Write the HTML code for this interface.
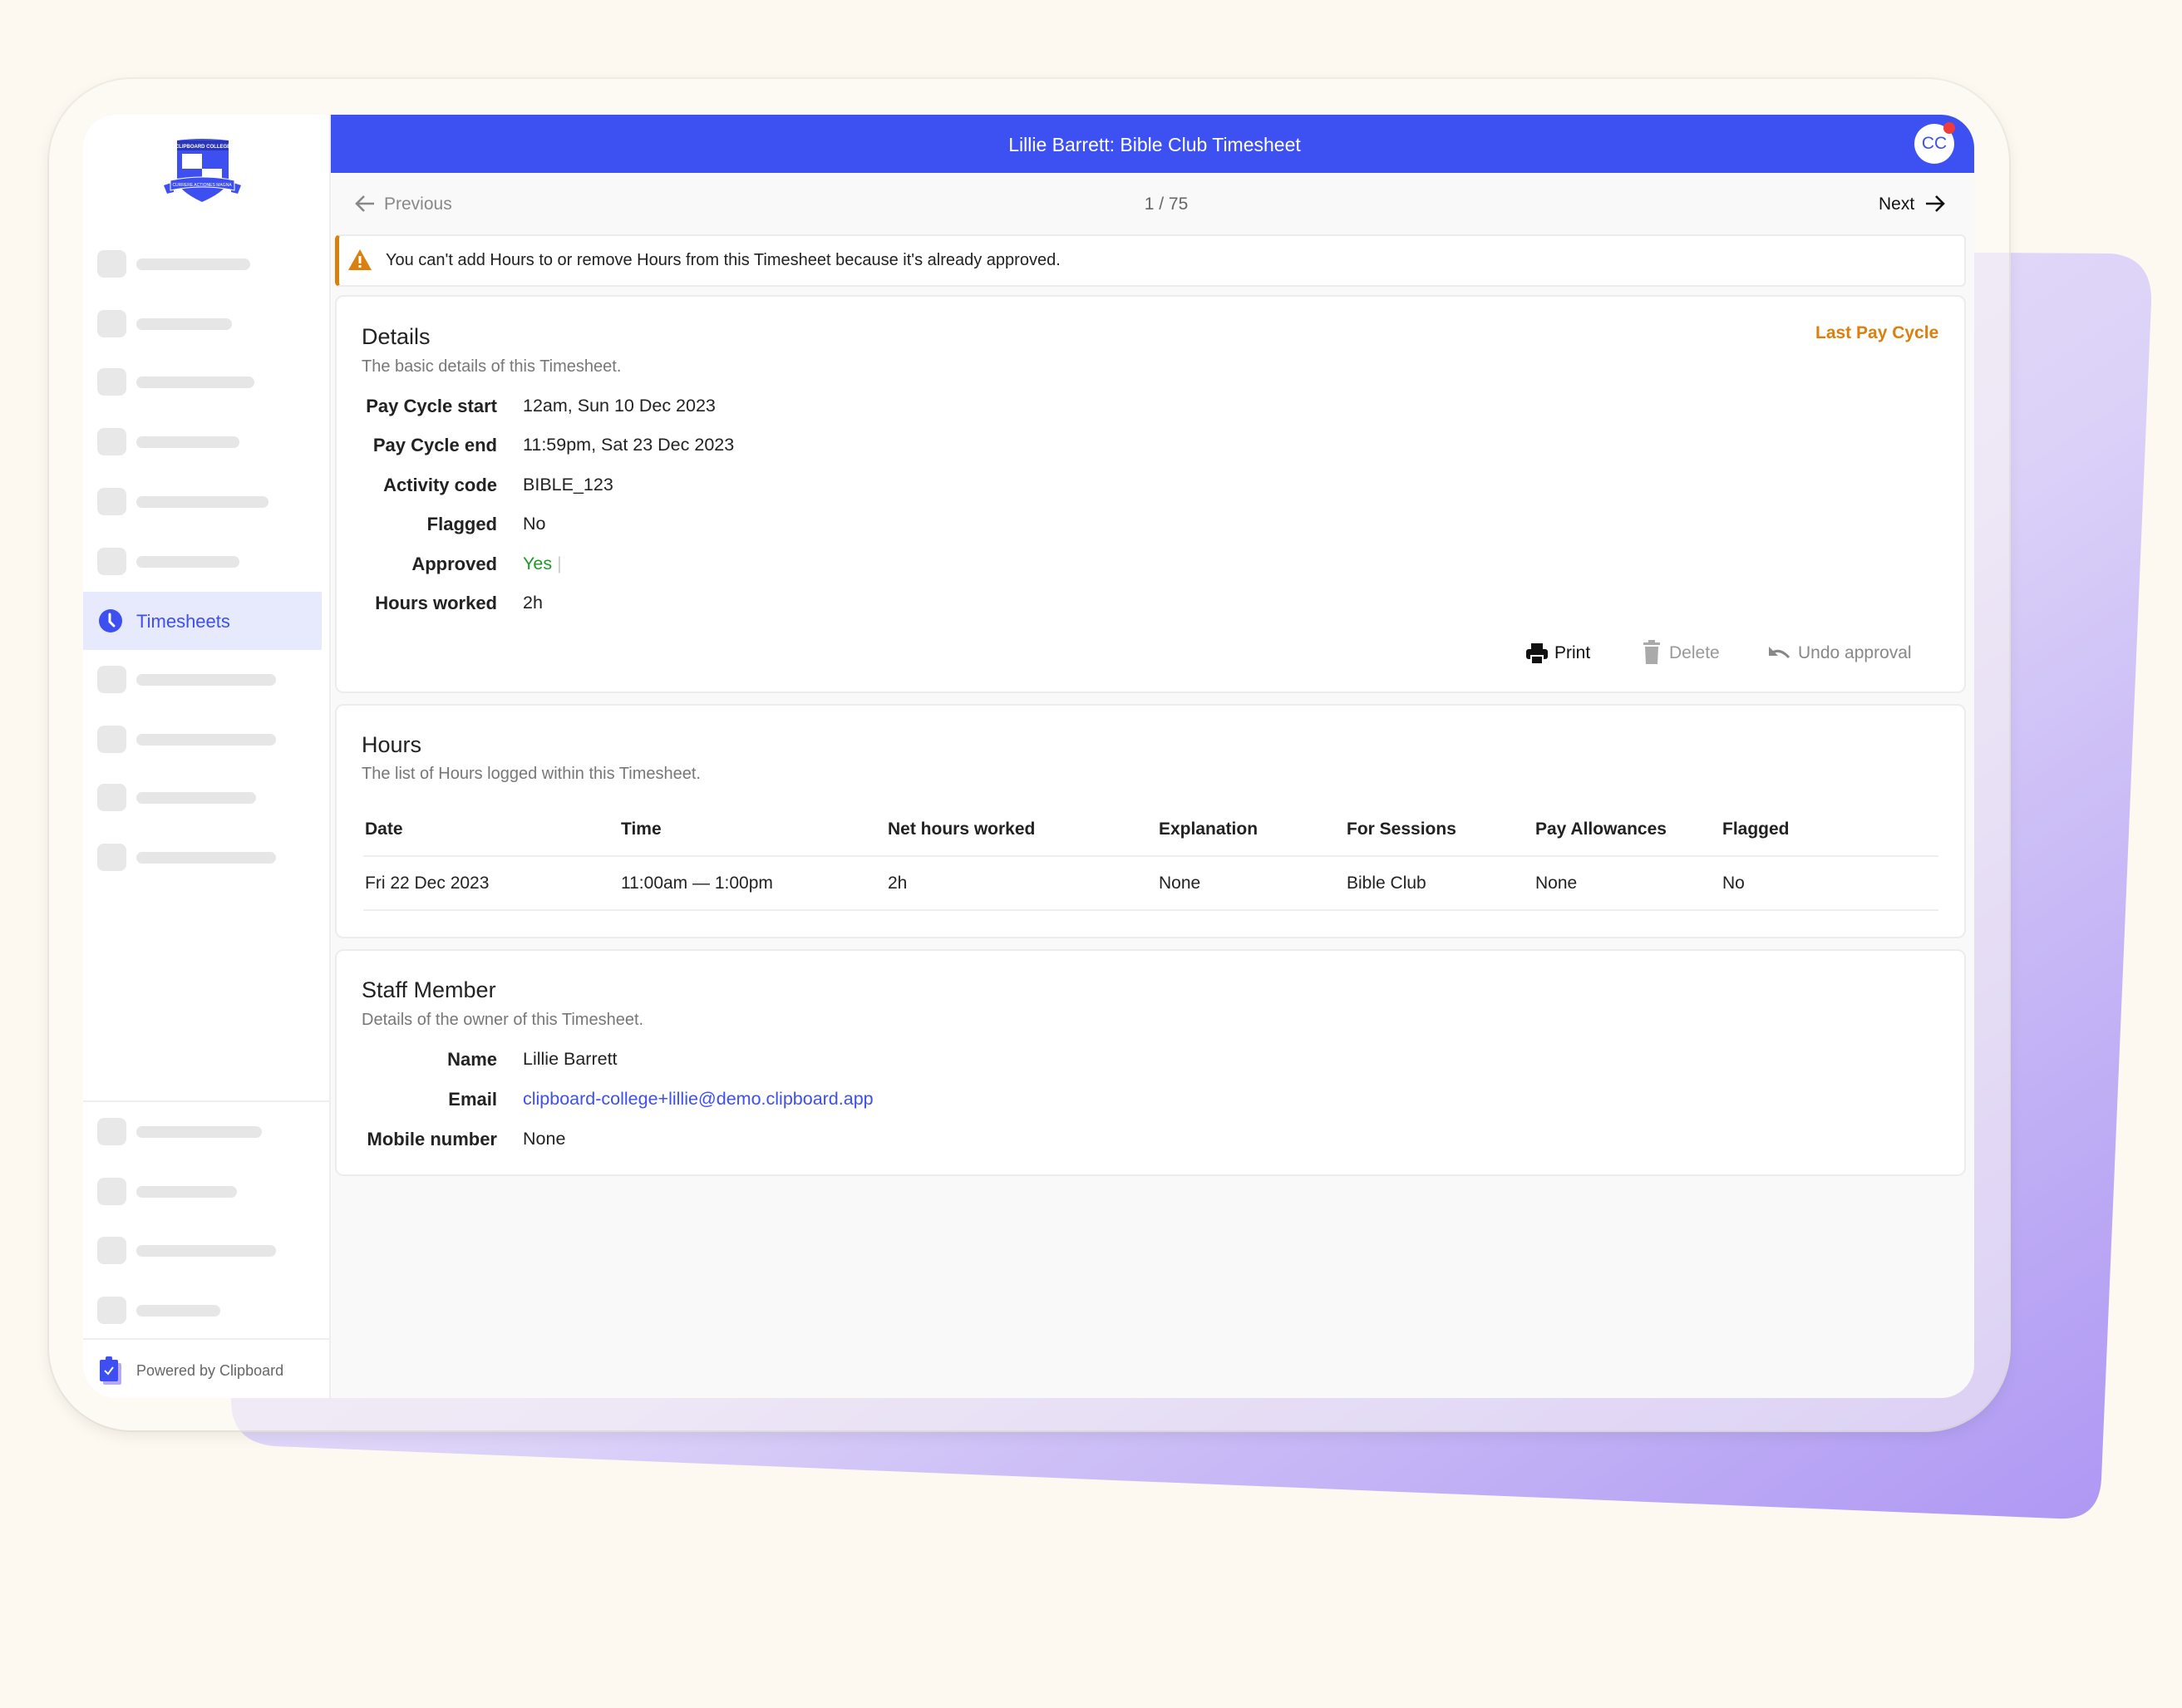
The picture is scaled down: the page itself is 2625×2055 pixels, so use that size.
<!DOCTYPE html>
<html><head><meta charset="utf-8"><style>
*{margin:0;padding:0;box-sizing:border-box}
body{width:2625px;height:2055px;background:#fdf9f1;font-family:"Liberation Sans",sans-serif;position:relative;overflow:hidden;color:#222}
.a{position:absolute;white-space:nowrap}
.frame{position:absolute;left:59px;top:95px;width:2358px;height:1626px;border-radius:100px;background:rgba(253,250,244,0.55);box-shadow:0 6px 18px rgba(0,0,0,0.08),0 0 0 2px rgba(240,236,228,0.8)}
.screen{position:absolute;left:100px;top:138px;width:2275px;height:1544px;border-radius:40px;overflow:hidden;background:#f9f9f9}
.side{position:absolute;left:0;top:0;width:298px;height:1546px;background:#fff;border-right:2px solid #eee}
.sq{position:absolute;left:17px;width:35px;height:33px;border-radius:8px;background:#e8e8e8}
.bar{position:absolute;left:64px;height:14px;border-radius:7px;background:#e6e6e6}
.card{position:absolute;left:303px;width:1962px;background:#fff;border:2px solid #ececec;border-radius:10px}
.lbl{position:absolute;font-size:22px;font-weight:bold;text-align:right;width:300px;color:#222}
.val{position:absolute;font-size:21.5px;color:#222}
.h{font-size:27px;color:#222}
.sub{font-size:20px;color:#777}
.th{position:absolute;font-size:21px;font-weight:bold;color:#222}
.td{position:absolute;font-size:21px;color:#222}
</style></head><body>
<svg class="a" style="left:0;top:0" width="2625" height="2055">
<defs><linearGradient id="g" x1="0" y1="0" x2="1" y2="1"><stop offset="0" stop-color="#f1ecfb"/><stop offset="0.55" stop-color="#dcd2f8"/><stop offset="1" stop-color="#ad96f3"/></linearGradient></defs>
<path d="M300 290 L2540 305 Q2590 310 2588 365 L2528 1780 Q2525 1830 2475 1827 L330 1740 Q278 1735 278 1685 Z" fill="url(#g)"/>
</svg>
<div class="frame"></div>
<div class="screen">
 <div class="side">
  <svg class="a" style="left:95px;top:27px" width="97" height="80" viewBox="0 0 97 80">
   <path d="M18 4 Q48 0 80 4 L80 50 Q80 64 48 78 Q18 64 18 50 Z" fill="#3d4ff0"/>
   <rect x="18" y="4" width="62" height="12" fill="#2a36b5"/>
   <text x="49" y="13" font-size="6" fill="#fff" text-anchor="middle" font-family="Liberation Sans" font-weight="bold">CLIPBOARD COLLEGE</text>
   <rect x="24" y="20" width="24" height="18" fill="#fff"/><rect x="48" y="38" width="24" height="14" fill="#fff"/>
   <path d="M2 58 L14 54 L14 66 L6 68 Z M95 58 L83 54 L83 66 L91 68 Z" fill="#3d4ff0"/>
   <path d="M10 52 Q48 44 87 52 L87 64 Q48 56 10 64 Z" fill="#3d4ff0" stroke="#fff" stroke-width="1"/>
   <text x="48" y="59" font-size="5" fill="#fff" text-anchor="middle" font-family="Liberation Sans">CURRERE ACTIONES MAGNA</text>
  </svg>
  <div class="sq" style="top:163px"></div><div class="bar" style="top:173px;width:137px"></div>
  <div class="sq" style="top:235px"></div><div class="bar" style="top:245px;width:115px"></div>
  <div class="sq" style="top:305px"></div><div class="bar" style="top:315px;width:142px"></div>
  <div class="sq" style="top:377px"></div><div class="bar" style="top:387px;width:124px"></div>
  <div class="sq" style="top:449px"></div><div class="bar" style="top:459px;width:159px"></div>
  <div class="sq" style="top:521px"></div><div class="bar" style="top:531px;width:124px"></div>
  <div class="a" style="left:0;top:574px;width:287px;height:70px;background:#e7e9fd"></div>
  <svg class="a" style="left:18px;top:594px" width="30" height="30"><circle cx="15" cy="15" r="14" fill="#3d4ff0"/><path d="M14 7 L14 16 L19 21" stroke="#fff" stroke-width="3" fill="none" stroke-linecap="round"/></svg>
  <div class="a" style="left:64px;top:597px;font-size:22px;color:#3d4ff0">Timesheets</div>
  <div class="sq" style="top:663px"></div><div class="bar" style="top:673px;width:168px"></div>
  <div class="sq" style="top:735px"></div><div class="bar" style="top:745px;width:168px"></div>
  <div class="sq" style="top:805px"></div><div class="bar" style="top:815px;width:144px"></div>
  <div class="sq" style="top:877px"></div><div class="bar" style="top:887px;width:168px"></div>
  <div class="a" style="left:0;top:1186px;width:298px;height:2px;background:#eee"></div>
  <div class="sq" style="top:1207px"></div><div class="bar" style="top:1217px;width:151px"></div>
  <div class="sq" style="top:1279px"></div><div class="bar" style="top:1289px;width:121px"></div>
  <div class="sq" style="top:1350px"></div><div class="bar" style="top:1360px;width:168px"></div>
  <div class="sq" style="top:1422px"></div><div class="bar" style="top:1432px;width:101px"></div>
  <div class="a" style="left:0;top:1472px;width:298px;height:2px;background:#eee"></div>
  <svg class="a" style="left:18px;top:1493px" width="30" height="36"><rect x="6" y="9" width="22" height="26" rx="2" fill="#b9a9f5"/><rect x="2" y="5" width="22" height="26" rx="2" fill="#3d4ff0"/><rect x="9" y="1" width="8" height="6" rx="2" fill="#3d4ff0"/><path d="M8 18 L12 22 L18 14" stroke="#fff" stroke-width="2" fill="none"/></svg>
  <div class="a" style="left:64px;top:1501px;font-size:18px;color:#666">Powered by Clipboard</div>
 </div>
 <div class="a" style="left:298px;top:0;width:1977px;height:70px;background:#3d50f2"></div>
 <div class="a" style="left:298px;top:23px;width:1982px;text-align:center;font-size:23px;color:#fff">Lillie Barrett: Bible Club Timesheet</div>
 <div class="a" style="left:2203px;top:11px;width:48px;height:48px;border-radius:50%;background:#fff;text-align:center;line-height:48px;font-size:21px;color:#3d50f2">CC</div>
 <div class="a" style="left:2238px;top:9px;width:14px;height:14px;border-radius:50%;background:#ef3b3b"></div>
 <svg class="a" style="left:326px;top:95px" width="26" height="24"><path d="M24 12 H4 M12 3 L3 12 L12 21" stroke="#888" stroke-width="2.6" fill="none"/></svg>
 <div class="a" style="left:362px;top:96px;font-size:21px;color:#888">Previous</div>
 <div class="a" style="left:1178px;top:96px;width:250px;text-align:center;font-size:21px;color:#666">1 / 75</div>
 <div class="a" style="left:2160px;top:96px;font-size:21px;color:#111">Next</div>
 <svg class="a" style="left:2215px;top:95px" width="26" height="24"><path d="M2 12 H22 M14 3 L23 12 L14 21" stroke="#111" stroke-width="2.6" fill="none"/></svg>
 <div class="a" style="left:303px;top:144px;width:1962px;height:63px;background:#fff;border:2px solid #ececec;border-left:5px solid #d9800f;border-radius:6px"></div>
 <svg class="a" style="left:318px;top:161px" width="30" height="27"><path d="M15 1 L29 26 H1 Z" fill="#d9800f"/><rect x="13.5" y="9" width="3" height="9" fill="#fff"/><rect x="13.5" y="20" width="3" height="3" fill="#fff"/></svg>
 <div class="a" style="left:364px;top:164px;font-size:20px;color:#222">You can't add Hours to or remove Hours from this Timesheet because it's already approved.</div>

 <div class="card" style="top:217px;height:479px"></div>
 <div class="a h" style="left:335px;top:252px">Details</div>
 <div class="a sub" style="left:335px;top:292px">The basic details of this Timesheet.</div>
 <div class="a" style="left:2084px;top:251px;font-size:21px;font-weight:bold;color:#d9800f;width:148px;text-align:right">Last Pay Cycle</div>
 <div class="lbl" style="left:198px;top:338px">Pay Cycle start</div><div class="val" style="left:529px;top:338px">12am, Sun 10 Dec 2023</div>
 <div class="lbl" style="left:198px;top:385px">Pay Cycle end</div><div class="val" style="left:529px;top:385px">11:59pm, Sat 23 Dec 2023</div>
 <div class="lbl" style="left:198px;top:433px">Activity code</div><div class="val" style="left:529px;top:433px">BIBLE_123</div>
 <div class="lbl" style="left:198px;top:480px">Flagged</div><div class="val" style="left:529px;top:480px">No</div>
 <div class="lbl" style="left:198px;top:528px">Approved</div><div class="val" style="left:529px;top:528px;color:#1a9a2a">Yes <span style="color:#ccc">|</span></div>
 <div class="lbl" style="left:198px;top:575px">Hours worked</div><div class="val" style="left:529px;top:575px">2h</div>
 <svg class="a" style="left:1735px;top:634px" width="28" height="28"><rect x="7" y="2" width="14" height="7" fill="#111"/><rect x="1" y="9" width="26" height="12" rx="3" fill="#111"/><rect x="7" y="17" width="14" height="10" fill="#111" stroke="#fff" stroke-width="2"/></svg>
 <div class="a" style="left:1770px;top:636px;font-size:21px;color:#111">Print</div>
 <svg class="a" style="left:1875px;top:632px" width="24" height="30"><rect x="2" y="3" width="20" height="3" fill="#aaa"/><rect x="8" y="0" width="8" height="4" fill="#aaa"/><path d="M4 8 H20 L19 29 H5 Z" fill="#aaa"/></svg>
 <div class="a" style="left:1908px;top:636px;font-size:21px;color:#999">Delete</div>
 <svg class="a" style="left:2025px;top:637px" width="30" height="22"><path d="M5 12 Q15 3 27 16" stroke="#888" stroke-width="3" fill="none"/><path d="M3 3 L3 14 L14 14 Z" fill="#888"/></svg>
 <div class="a" style="left:2063px;top:636px;font-size:21px;color:#888">Undo approval</div>

 <div class="card" style="top:709px;height:282px"></div>
 <div class="a h" style="left:335px;top:743px">Hours</div>
 <div class="a sub" style="left:335px;top:782px">The list of Hours logged within this Timesheet.</div>
 <div class="th" style="left:339px;top:848px">Date</div>
 <div class="th" style="left:647px;top:848px">Time</div>
 <div class="th" style="left:968px;top:848px">Net hours worked</div>
 <div class="th" style="left:1294px;top:848px">Explanation</div>
 <div class="th" style="left:1520px;top:848px">For Sessions</div>
 <div class="th" style="left:1747px;top:848px">Pay Allowances</div>
 <div class="th" style="left:1972px;top:848px">Flagged</div>
 <div class="a" style="left:337px;top:891px;width:1895px;height:2px;background:#eee"></div>
 <div class="td" style="left:339px;top:913px">Fri 22 Dec 2023</div>
 <div class="td" style="left:647px;top:913px">11:00am — 1:00pm</div>
 <div class="td" style="left:968px;top:913px">2h</div>
 <div class="td" style="left:1294px;top:913px">None</div>
 <div class="td" style="left:1520px;top:913px">Bible Club</div>
 <div class="td" style="left:1747px;top:913px">None</div>
 <div class="td" style="left:1972px;top:913px">No</div>
 <div class="a" style="left:337px;top:956px;width:1895px;height:2px;background:#eee"></div>

 <div class="card" style="top:1004px;height:273px"></div>
 <div class="a h" style="left:335px;top:1038px">Staff Member</div>
 <div class="a sub" style="left:335px;top:1078px">Details of the owner of this Timesheet.</div>
 <div class="lbl" style="left:198px;top:1124px">Name</div><div class="val" style="left:529px;top:1124px">Lillie Barrett</div>
 <div class="lbl" style="left:198px;top:1172px">Email</div><div class="val" style="left:529px;top:1172px;color:#3d4ff0">clipboard-college+lillie@demo.clipboard.app</div>
 <div class="lbl" style="left:198px;top:1220px">Mobile number</div><div class="val" style="left:529px;top:1220px">None</div>
</div>
</body></html>
